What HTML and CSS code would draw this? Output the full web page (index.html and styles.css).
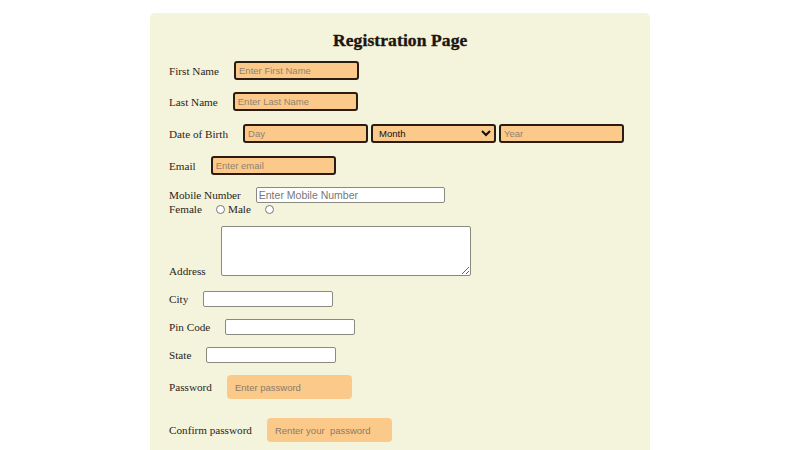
FILE: index.html
```html
<!DOCTYPE html>
<html>
<head>
<meta charset="utf-8">
<link rel="stylesheet" href="styles.css">
</head>
<body>
<div class="card">
  <h1 class="title">Registration Page</h1>
  <div class="row r-first"><label>First Name</label><input class="fancy" placeholder="Enter First Name"></div>
  <div class="row r-last"><label>Last Name</label><input class="fancy" placeholder="Enter Last Name"></div>
  <div class="row r-dob"><label>Date of Birth</label>
    <div class="dob">
      <input class="fancy" placeholder="Day">
      <select class="fancy sel"><option>Month</option></select>
      <input class="fancy" placeholder="Year">
    </div>
  </div>
  <div class="row r-email"><label>Email</label><input class="fancy" placeholder="Enter email"></div>
  <div class="row r-mobile"><label>Mobile Number</label><input class="plain mobile" placeholder="Enter Mobile Number"></div>
  <div class="row r-gender"><label>Female</label><span class="radio"></span><label>Male</label><span class="radio r2"></span></div>
  <div class="row r-address"><label>Address</label><textarea class="area"></textarea></div>
  <div class="row r-city"><label>City</label><input class="plain"></div>
  <div class="row r-pin"><label>Pin Code</label><input class="plain"></div>
  <div class="row r-state"><label>State</label><input class="plain"></div>
  <div class="row r-pass"><label>Password</label><input class="soft" placeholder="Enter password"></div>
  <div class="row r-confirm"><label>Confirm password</label><input class="soft" placeholder="Renter your  password"></div>
</div>
</body>
</html>
```
FILE: styles.css
```css
html, body {
  margin: 0;
  padding: 0;
  background: #ffffff;
}
body {
  font-family: "Liberation Serif", "DejaVu Serif", serif;
  color: #2a1f17;
  overflow: hidden;
}
.card {
  width: 500px;
  margin: 13px 0 0 150px;
  background: #f4f3dc;
  border-radius: 5px;
  padding: 17px 0 40px 19px;
  box-sizing: border-box;
  height: 480px;
}
.title {
  margin: 0 0 0 164px;
  font-size: 17.5px;
  line-height: 21px;
  font-weight: bold;
  color: #1c1510;
  letter-spacing: 0.1px;
  -webkit-text-stroke: 0.35px #1c1510;
}
.row {
  display: flex;
  align-items: center;
  gap: 15px;
  font-size: 11.2px;
}
.row label {
  white-space: nowrap;
}
.fancy {
  box-sizing: border-box;
  width: 125px;
  height: 19px;
  border: 2px solid #2a1c10;
  border-radius: 3px;
  background: #fbca8b;
  font-family: "Liberation Sans", Arial, sans-serif;
  font-size: 9.5px;
  padding: 0 3px;
  color: #222;
  outline: none;
}
.fancy::placeholder { color: #8f8270; }
.sel {
  font-size: 9.5px;
  color: #111;
  padding: 0 2px;
}
.dob {
  display: flex;
  gap: 3px;
}
.plain {
  box-sizing: border-box;
  width: 130px;
  height: 16px;
  border: 1px solid #8a8a80;
  border-radius: 2px;
  background: #ffffff;
  font-family: "Liberation Sans", Arial, sans-serif;
  font-size: 10.5px;
  padding: 0 2px;
}
.plain::placeholder { color: #777; }
.mobile { width: 189px; }
.radio {
  width: 7px;
  height: 7px;
  border: 1px solid #777;
  border-radius: 50%;
  background: #fff;
}
.r-gender { gap: 0; }
.r-gender .radio { margin: 0 3px 0 14px; }
.r-gender .r2 { margin-left: 14px; }
.area {
  box-sizing: border-box;
  width: 250px;
  height: 50px;
  border: 1px solid #8a8a80;
  border-radius: 2px;
  background: #fff;
}
.soft {
  box-sizing: border-box;
  width: 125px;
  height: 24px;
  border: none;
  border-radius: 4px;
  background: #fbca8b;
  font-family: "Liberation Sans", Arial, sans-serif;
  font-size: 9.5px;
  padding: 0 8px;
}
.soft::placeholder { color: #8a7a68; }

.r-first { margin-top: 10px; height: 19px; }
.r-last { margin-top: 12px; height: 19px; }
.r-dob { margin-top: 13px; height: 19px; }
.r-email { margin-top: 13px; height: 19px; }
.r-mobile { margin-top: 12px; height: 16px; }
.r-gender { height: 12px; margin-top: 0; }
.r-address { margin-top: 11px; align-items: flex-end; }
.r-address label { line-height: 12px; margin-bottom: -1px; }
.r-city { margin-top: 15px; height: 16px; }
.r-pin { margin-top: 12px; height: 16px; }
.r-state { margin-top: 12px; height: 16px; }
.r-pass { margin-top: 12px; height: 24px; }
.r-confirm { margin-top: 19px; height: 24px; }
```
